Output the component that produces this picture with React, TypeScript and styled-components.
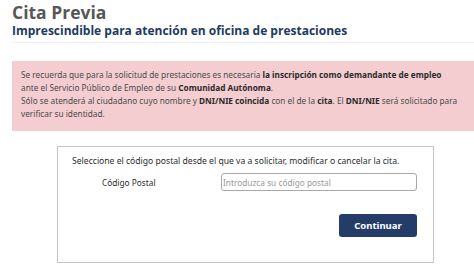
import styled, { createGlobalStyle } from "styled-components";

const GlobalStyle = createGlobalStyle`
  html, body {
    margin: 0;
    padding: 0;
    background: #fff;
  }
  body {
    font-family: "Open Sans", "Noto Sans", sans-serif;
    overflow: hidden;
  }
`;

const Page = styled.div`
  width: 474px;
  height: 266px;
  padding-left: 12px;
  box-sizing: border-box;
`;

const Header = styled.header`
  padding-top: 1px;
  padding-bottom: 4px;
  border-bottom: 1px solid #eef0f3;
`;

const Title = styled.h1`
  margin: 0;
  font-size: 17.5px;
  line-height: 22px;
  font-weight: 700;
  color: #575757;
`;

const Subtitle = styled.h2`
  margin: 0;
  font-size: 12px;
  line-height: 15px;
  font-weight: 700;
  color: #213a5f;
`;

const Notice = styled.div`
  margin-top: 18px;
  padding: 7px 0 11px 9px;
  background: #f4cdd1;
  font-family: "Noto Sans", "Open Sans", sans-serif;
  font-size: 8.25px;
  line-height: 13px;
  color: #4a4a4a;

  p {
    margin: 0;
  }

  b {
    font-weight: 700;
    color: #2a2a2a;
  }
`;

const Card = styled.section`
  margin: 15px 0 0 45px;
  width: 377px;
  height: 117px;
  box-sizing: border-box;
  border: 1px solid #c4c4c4;
  padding: 8px 16px 0 14px;
  font-family: "Noto Sans", "Open Sans", sans-serif;
  font-size: 8.6px;
  color: #2c2c2c;
`;

const Lead = styled.p`
  margin: 0;
  line-height: 12px;
`;

const Row = styled.div`
  display: grid;
  grid-template-columns: 149px 1fr;
  align-items: center;
  margin-top: 6px;
`;

const Label = styled.label`
  padding-left: 30px;
  font-size: 8.3px;
`;

const Input = styled.input`
  height: 18px;
  box-sizing: border-box;
  border: 1px solid #a9a9a9;
  border-radius: 3px;
  padding: 0 1px;
  font-family: inherit;
  font-size: 8.3px;
  color: #333;
  outline: none;

  &::placeholder {
    color: #9a9a9a;
  }
`;

const Actions = styled.div`
  display: flex;
  justify-content: flex-end;
  margin-top: 23px;
`;

const Button = styled.button`
  width: 78px;
  height: 23px;
  border: none;
  border-radius: 3px;
  background: #243d68;
  color: #fff;
  font-family: "Noto Sans", "Open Sans", sans-serif;
  font-weight: 700;
  font-size: 9.5px;
  cursor: pointer;
`;

export default function App() {
  return (
    <>
      <GlobalStyle />
      <Page>
        <Header>
          <Title>Cita Previa</Title>
          <Subtitle>Imprescindible para atención en oficina de prestaciones</Subtitle>
        </Header>
        <Notice>
          <p>
            Se recuerda que para la solicitud de prestaciones es necesaria{" "}
            <b>la inscripción como demandante de empleo</b>
            <br />
            ante el Servicio Público de Empleo de su <b>Comunidad Autónoma</b>.
          </p>
          <p>
            Sólo se atenderá al ciudadano cuyo nombre y <b>DNI/NIE coincida</b> con el de
            la <b>cita</b>. El <b>DNI/NIE</b> será solicitado para verificar su identidad.
          </p>
        </Notice>
        <Card>
          <Lead>
            Seleccione el código postal desde el que va a solicitar, modificar o cancelar
            la cita.
          </Lead>
          <Row>
            <Label htmlFor="cp">Código Postal</Label>
            <Input id="cp" placeholder="Introduzca su código postal" />
          </Row>
          <Actions>
            <Button type="button">Continuar</Button>
          </Actions>
        </Card>
      </Page>
    </>
  );
}
